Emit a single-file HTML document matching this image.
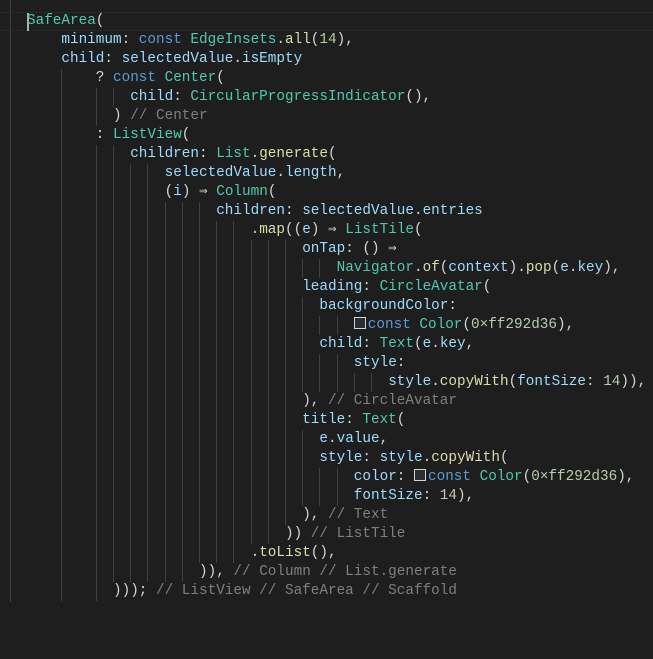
<!DOCTYPE html>
<html><head><meta charset="utf-8"><style>
html,body{margin:0;padding:0;background:#1e1e1e;width:653px;height:659px;overflow:hidden}
#ed{position:relative;width:653px;height:659px;font-family:"Liberation Mono","DejaVu Sans Mono",monospace;font-size:14.33px;color:#d4d4d4}
.l{position:absolute;left:27px;height:19px;line-height:19px;white-space:pre}
.g{position:absolute;width:1px;background:#404040}
.v{color:#9cdcfe}.k{color:#569cd6}.c{color:#4ec9b0}.f{color:#dcdcaa}.n{color:#b5cea8}.m{color:#7f7f7f}
.box{display:inline-block;width:10px;height:10px;border:1px solid #d4d4d4;background:#292d36;vertical-align:-1px;margin-right:2px}
</style></head><body><div id="ed">
<div class="g" style="left:10px;top:0;height:602px"></div>
<div style="position:absolute;left:0;top:12px;width:653px;height:19px;border-top:1px solid #282828;border-bottom:1px solid #282828;box-sizing:border-box"></div>
<div style="position:absolute;left:27px;top:13px;width:2px;height:18px;background:#aeafad"></div>
<div id="lines"></div>
</div>
<script>
var L=[
[0,'<span class="c">SafeArea</span>('],
[4,'<span class="v">minimum</span>: <span class="k">const</span> <span class="c">EdgeInsets</span>.<span class="f">all</span>(<span class="n">14</span>),'],
[4,'<span class="v">child</span>: <span class="v">selectedValue</span>.<span class="v">isEmpty</span>'],
[8,'? <span class="k">const</span> <span class="c">Center</span>('],
[12,'<span class="v">child</span>: <span class="c">CircularProgressIndicator</span>(),'],
[10,') <span class="m">// Center</span>'],
[8,': <span class="c">ListView</span>('],
[12,'<span class="v">children</span>: <span class="c">List</span>.<span class="f">generate</span>('],
[16,'<span class="v">selectedValue</span>.<span class="v">length</span>,'],
[16,'(<span class="v">i</span>) ⇒ <span class="c">Column</span>('],
[22,'<span class="v">children</span>: <span class="v">selectedValue</span>.<span class="v">entries</span>'],
[26,'.<span class="f">map</span>((<span class="v">e</span>) ⇒ <span class="c">ListTile</span>('],
[32,'<span class="v">onTap</span>: () ⇒'],
[36,'<span class="c">Navigator</span>.<span class="f">of</span>(<span class="v">context</span>).<span class="f">pop</span>(<span class="v">e</span>.<span class="v">key</span>),'],
[32,'<span class="v">leading</span>: <span class="c">CircleAvatar</span>('],
[34,'<span class="v">backgroundColor</span>:'],
[38,'<span class="box"></span><span class="k">const</span> <span class="c">Color</span>(<span class="n">0×ff292d36</span>),'],
[34,'<span class="v">child</span>: <span class="c">Text</span>(<span class="v">e</span>.<span class="v">key</span>,'],
[38,'<span class="v">style</span>:'],
[42,'<span class="v">style</span>.<span class="f">copyWith</span>(<span class="v">fontSize</span>: <span class="n">14</span>)),'],
[32,'), <span class="m">// CircleAvatar</span>'],
[32,'<span class="v">title</span>: <span class="c">Text</span>('],
[34,'<span class="v">e</span>.<span class="v">value</span>,'],
[34,'<span class="v">style</span>: <span class="v">style</span>.<span class="f">copyWith</span>('],
[38,'<span class="v">color</span>: <span class="box"></span><span class="k">const</span> <span class="c">Color</span>(<span class="n">0×ff292d36</span>),'],
[38,'<span class="v">fontSize</span>: <span class="n">14</span>),'],
[32,'), <span class="m">// Text</span>'],
[30,')) <span class="m">// ListTile</span>'],
[26,'.<span class="f">toList</span>(),'],
[20,')), <span class="m">// Column // List.generate</span>'],
[10,'))); <span class="m">// ListView // SafeArea // Scaffold</span>']
];
var h='',cw=8.6;
L.forEach(function(x,i){
 var top=12+i*19,n=x[0];
 for(var k=4;k<n;k+=2){ if(k==6)continue; h+='<div class="g" style="left:'+(27+k*cw).toFixed(1)+'px;top:'+top+'px;height:19px"></div>';}
 h+='<div class="l" style="top:'+top+'px;left:'+(27+n*cw).toFixed(1)+'px">'+x[1]+'</div>';
});
document.getElementById('lines').innerHTML=h;
</script>
</body></html>
